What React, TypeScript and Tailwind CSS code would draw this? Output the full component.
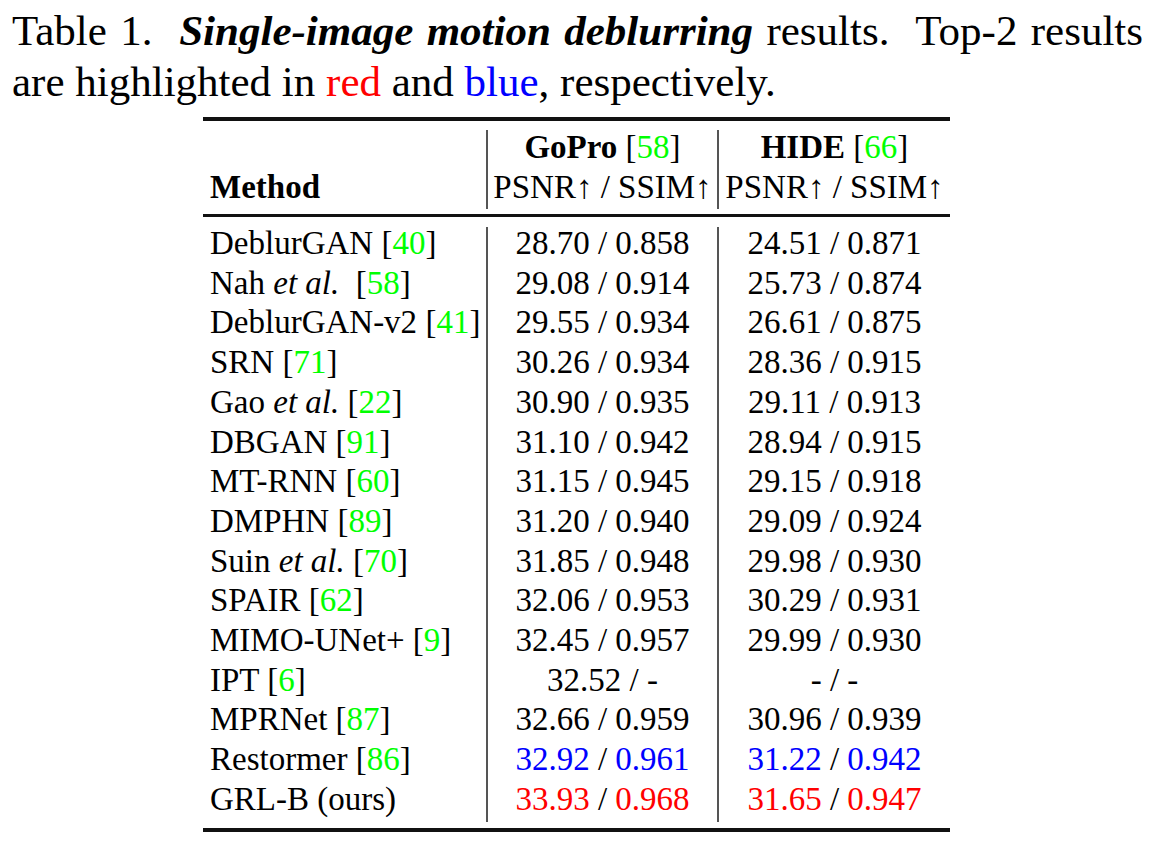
type Row = {
  name: React.ReactNode
  gopro: [string, string] | string
  hide: [string, string] | string
  color?: "red" | "blue"
}

const Cite = ({ n }: { n: number }) => (
  <>
    [<span className="text-[#00ff00]">{n}</span>]
  </>
)

const rows: Row[] = [
  { name: <>DeblurGAN <Cite n={40} /></>, gopro: ["28.70", "0.858"], hide: ["24.51", "0.871"] },
  { name: <>Nah <i>et al.</i>&nbsp; <Cite n={58} /></>, gopro: ["29.08", "0.914"], hide: ["25.73", "0.874"] },
  { name: <>DeblurGAN-v2 <Cite n={41} /></>, gopro: ["29.55", "0.934"], hide: ["26.61", "0.875"] },
  { name: <>SRN <Cite n={71} /></>, gopro: ["30.26", "0.934"], hide: ["28.36", "0.915"] },
  { name: <>Gao <i>et al.</i> <Cite n={22} /></>, gopro: ["30.90", "0.935"], hide: ["29.11", "0.913"] },
  { name: <>DBGAN <Cite n={91} /></>, gopro: ["31.10", "0.942"], hide: ["28.94", "0.915"] },
  { name: <>MT-RNN <Cite n={60} /></>, gopro: ["31.15", "0.945"], hide: ["29.15", "0.918"] },
  { name: <>DMPHN <Cite n={89} /></>, gopro: ["31.20", "0.940"], hide: ["29.09", "0.924"] },
  { name: <>Suin <i>et al.</i> <Cite n={70} /></>, gopro: ["31.85", "0.948"], hide: ["29.98", "0.930"] },
  { name: <>SPAIR <Cite n={62} /></>, gopro: ["32.06", "0.953"], hide: ["30.29", "0.931"] },
  { name: <>MIMO-UNet+ <Cite n={9} /></>, gopro: ["32.45", "0.957"], hide: ["29.99", "0.930"] },
  { name: <>IPT <Cite n={6} /></>, gopro: "32.52 / -", hide: "- / -" },
  { name: <>MPRNet <Cite n={87} /></>, gopro: ["32.66", "0.959"], hide: ["30.96", "0.939"] },
  { name: <>Restormer <Cite n={86} /></>, gopro: ["32.92", "0.961"], hide: ["31.22", "0.942"], color: "blue" },
  { name: <>GRL-B (ours)</>, gopro: ["33.93", "0.968"], hide: ["31.65", "0.947"], color: "red" },
]

const colorClass = (c?: "red" | "blue") =>
  c === "red" ? "text-[#ff0000]" : c === "blue" ? "text-[#0000ff]" : ""

function Score({ v, color }: { v: [string, string] | string; color?: "red" | "blue" }) {
  if (typeof v === "string") return <>{v}</>
  return (
    <>
      <span className={colorClass(color)}>{v[0]}</span> / <span className={colorClass(color)}>{v[1]}</span>
    </>
  )
}

const Divider = ({ top, bottom }: { top: string; bottom: string }) => (
  <div className={`w-[2px] bg-[#555] ${top} ${bottom}`} />
)

export default function App() {
  return (
    <div className="w-[1152px] h-[845px] bg-white text-black font-['Liberation_Serif',serif] overflow-hidden">
      {/* caption */}
      <p className="pl-[12px] pr-[9px] pt-[5px] text-[43px] leading-[51px] text-justify">
        Table 1.&nbsp; <b><i>Single-image motion deblurring</i></b> results.&nbsp; Top-2 results are highlighted in{" "}
        <span className="text-[#ff0000]">red</span> and <span className="text-[#0000ff]">blue</span>, respectively.
      </p>

      <div className="ml-[203px] mt-[10px] w-[747px] text-[33px]">
        <div className="h-[4px] bg-[#111]" />

        {/* header */}
        <div className="flex">
          <div className="w-[283px] pl-[7px] pt-[6px] pb-[7px] leading-[40px]">
            <div>&nbsp;</div>
            <div className="font-bold">Method</div>
          </div>
          <Divider top="mt-[9px]" bottom="mb-[5px]" />
          <div className="w-[229px] pt-[6px] pb-[7px] leading-[40px] text-center whitespace-nowrap">
            <div><b>GoPro</b> <Cite n={58} /></div>
            <div>PSNR↑ / SSIM↑</div>
          </div>
          <Divider top="mt-[9px]" bottom="mb-[5px]" />
          <div className="w-[231px] pt-[6px] pb-[7px] leading-[40px] text-center whitespace-nowrap">
            <div><b>HIDE</b> <Cite n={66} /></div>
            <div>PSNR↑ / SSIM↑</div>
          </div>
        </div>

        <div className="h-[3px] bg-[#111]" />

        {/* body */}
        <div className="flex">
          <div className="w-[283px] pl-[7px] pt-[7px] pb-[8px] leading-[39.7px] whitespace-nowrap">
            {rows.map((r, i) => (
              <div key={i}>{r.name}</div>
            ))}
          </div>
          <Divider top="mt-[10px]" bottom="mb-[6px]" />
          <div className="w-[229px] pt-[7px] pb-[8px] leading-[39.7px] text-center whitespace-nowrap">
            {rows.map((r, i) => (
              <div key={i}><Score v={r.gopro} color={r.color} /></div>
            ))}
          </div>
          <Divider top="mt-[10px]" bottom="mb-[6px]" />
          <div className="w-[231px] pt-[7px] pb-[8px] leading-[39.7px] text-center whitespace-nowrap">
            {rows.map((r, i) => (
              <div key={i}><Score v={r.hide} color={r.color} /></div>
            ))}
          </div>
        </div>

        <div className="h-[4px] bg-[#111]" />
      </div>
    </div>
  )
}
